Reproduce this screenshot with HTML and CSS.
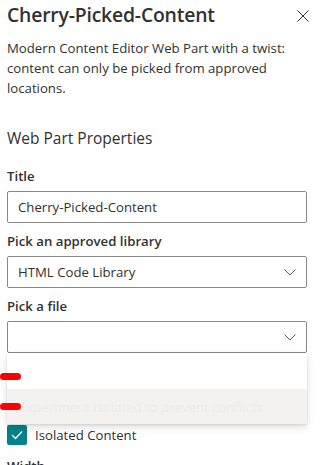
FILE: index.html
```html
<!DOCTYPE html>
<html>
<head>
<meta charset="utf-8">
<link rel="stylesheet" href="styles.css">
</head>
<body>
<div class="panel">
  <div class="header">
    <h1 class="title">Cherry-Picked-Content</h1>
    <button class="close" aria-label="Close">
      <svg width="12" height="12" viewBox="0 0 12 12"><path d="M0.5 0.5 L11.5 11.5 M11.5 0.5 L0.5 11.5" stroke="#323130" stroke-width="1" fill="none"/></svg>
    </button>
  </div>
  <p class="desc">Modern Content Editor Web Part with a twist: content can only be picked from approved locations.</p>
  <h2 class="group">Web Part Properties</h2>
  <div class="field">
    <label class="label">Title</label>
    <div class="box">Cherry-Picked-Content</div>
  </div>
  <div class="field">
    <label class="label">Pick an approved library</label>
    <div class="box dd">
      <span>HTML Code Library</span>
      <svg class="chev" width="12" height="7" viewBox="0 0 12 7"><path d="M0.5 0.5 L6 6 L11.5 0.5" stroke="#605e5c" stroke-width="1" fill="none"/></svg>
    </div>
  </div>
  <div class="field file">
    <label class="label">Pick a file</label>
    <div class="box dd">
      <span></span>
      <svg class="chev" width="12" height="7" viewBox="0 0 12 7"><path d="M0.5 0.5 L6 6 L11.5 0.5" stroke="#605e5c" stroke-width="1" fill="none"/></svg>
    </div>
    <div class="callout">
      <div class="opt"></div>
      <div class="opt sel">Experiment isolated to prevent conflicts</div>
    </div>
  </div>
  <div class="check">
    <span class="cb"><svg width="12" height="10" viewBox="0 0 12 10"><path d="M1 5 L4.5 8.5 L11 1.5" stroke="#fff" stroke-width="1.3" fill="none"/></svg></span>
    <span class="cblabel">Isolated Content</span>
  </div>
  <label class="label">Width</label>
</div>
<span class="mark m1"></span>
<span class="mark m2"></span>
</body>
</html>
```
FILE: styles.css
```css
html, body {
  margin: 0;
  padding: 0;
  background: #fff;
  overflow: hidden;
}
body {
  font-family: "Open Sans", "Noto Sans", sans-serif;
  color: #323130;
  width: 324px;
  height: 465px;
  position: relative;
}
.panel {
  padding: 0 17px 0 7px;
}
.header {
  display: flex;
  justify-content: space-between;
  align-items: center;
  height: 32px;
}
.title {
  margin: 0;
  font-size: 19.4px;
  font-weight: 600;
  letter-spacing: -0.2px;
  line-height: 26px;
  margin-top: -2px;
}
.close {
  border: 0;
  background: none;
  padding: 0;
  margin-right: -3px;
  width: 14px;
  height: 14px;
  display: flex;
  align-items: center;
  justify-content: center;
}
.desc {
  margin: 6px 0 0;
  font-size: 13.2px;
  line-height: 20px;
}
.group {
  margin: 29px 0 0;
  font-size: 15.5px;
  font-weight: 400;
  line-height: 22px;
}
.field {
  display: flex;
  flex-direction: column;
}
.label {
  display: block;
  font-size: 13.2px;
  font-weight: 600;
  line-height: 20px;
  padding: 5px 0;
}
.group + .field {
  margin-top: 12px;
}
.box {
  box-sizing: border-box;
  height: 32px;
  border: 1px solid #8a8886;
  border-radius: 2px;
  padding: 0 10px;
  display: flex;
  align-items: center;
  font-size: 13.2px;
}
.dd {
  justify-content: space-between;
}
.field + .field {
  margin-top: 3px;
}
.file {
  position: relative;
}
.callout {
  position: absolute;
  left: 0;
  right: 0;
  top: 62px;
  background: #fff;
  box-shadow: 0 3px 8px rgba(0,0,0,0.13), 0 1px 2px rgba(0,0,0,0.1);
  z-index: 2;
}
.opt {
  height: 36px;
  display: flex;
  align-items: center;
  padding: 0 12px;
  font-size: 13.2px;
  color: #fff;
  white-space: nowrap;
  overflow: hidden;
}
.opt.sel {
  background: #f3f2f1;
  color: #edebe9;
  height: 35px;
}
.check {
  display: flex;
  align-items: center;
  gap: 8px;
  margin-top: 72px;
}
.cb {
  width: 20px;
  height: 20px;
  background: #038387;
  border-radius: 2px;
  display: flex;
  align-items: center;
  justify-content: center;
}
.cblabel {
  font-size: 13.2px;
  line-height: 20px;
}
.check + .label {
  margin-top: 6px;
}
.mark {
  position: absolute;
  left: 0;
  width: 21px;
  height: 7px;
  background: #ff0000;
  border-radius: 4px;
  z-index: 5;
}
.m1 { top: 373px; }
.m2 { top: 403px; }
```
